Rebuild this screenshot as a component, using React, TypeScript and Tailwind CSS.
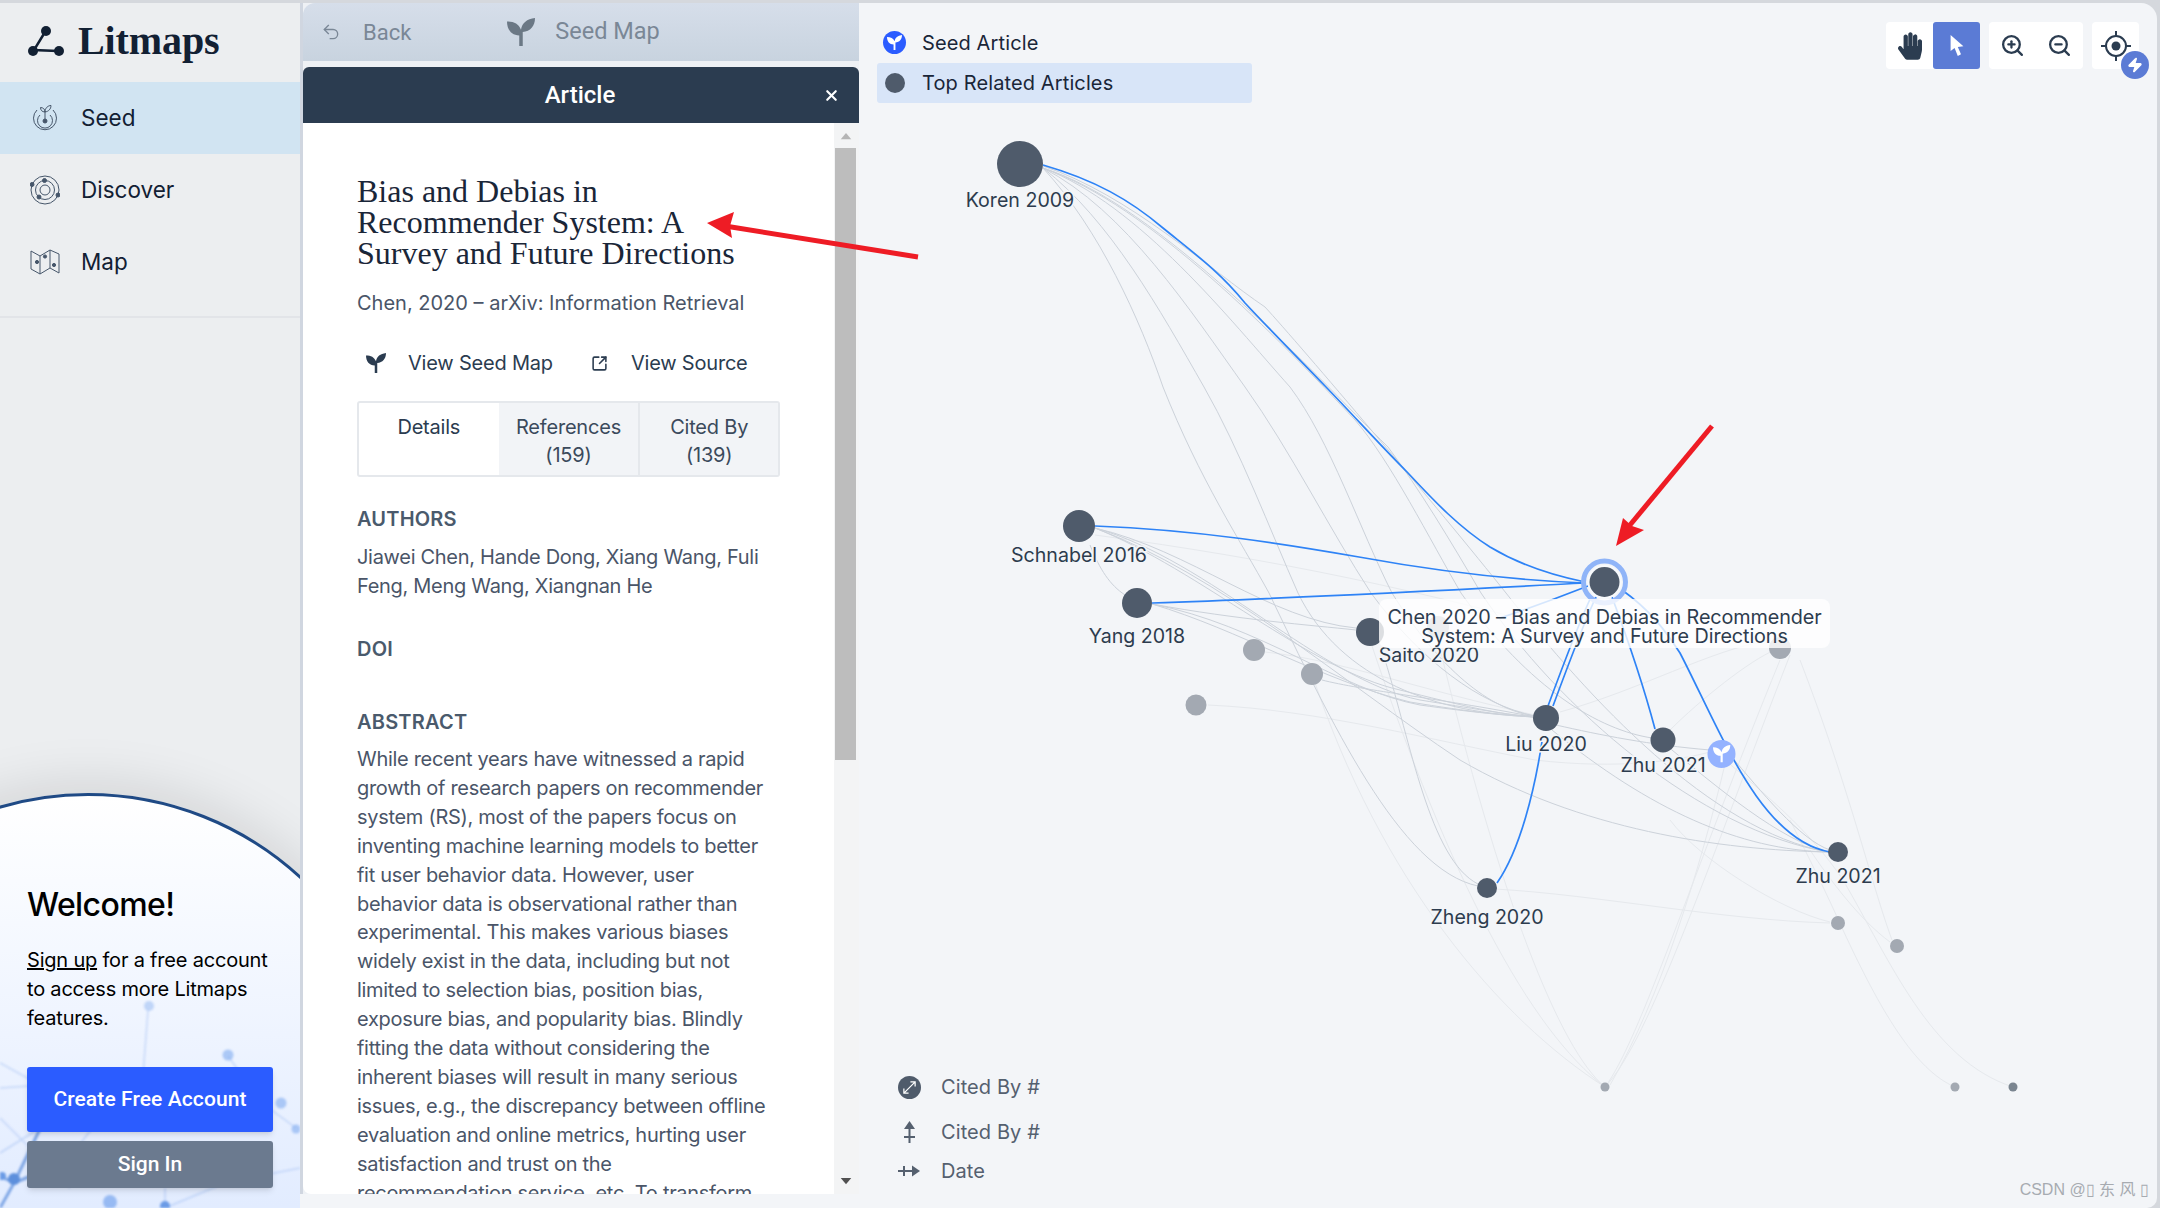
import React from "react";
import { Undo2, X, ZoomIn, ZoomOut, Zap, SquareArrowOutUpRight } from "lucide-react";
import { FaHandPaper } from "react-icons/fa";

const SPROUT = "M10.500 24 L10.500 15 C4 15 0 10 0 3 C6 3 10 5 12 10 C13 4 17 1 24 0 C24 7 20 11.500 13.500 12 L13.500 24 Z";

function Sprout({ className }: { className?: string }) {
  return (
    <svg viewBox="0 0 24 24" className={className} fill="currentColor">
      <path d={SPROUT} />
    </svg>
  );
}

function SeedIcon() {
  return (
    <svg viewBox="0 0 26 28" className="w-[26px] h-[28px]" fill="none" stroke="#46566a" strokeWidth="1">
      <path d="M5 6 A11.500 11.500 0 1 0 21 6" />
      <path d="M8 11 A7.500 7.500 0 1 0 18 11" />
      <circle cx="13" cy="17" r="2" fill="#46566a" />
      <path d="M13 15 L13 7 M13 8 C10 8 8.500 6 8.500 3.500 C11 3.500 13 5 13 8 C13 4 16 1.500 19 1.500 C19 5 16.500 7.500 13 8" />
    </svg>
  );
}

function DiscoverIcon() {
  return (
    <svg viewBox="0 0 30 30" className="w-[30px] h-[30px]" fill="none" stroke="#46566a" strokeWidth="1">
      <circle cx="15" cy="15" r="5" />
      <circle cx="15" cy="15" r="9.500" />
      <circle cx="15" cy="15" r="14" />
      <circle cx="14.500" cy="5.500" r="2" fill="#46566a" />
      <circle cx="9" cy="22" r="2" fill="#46566a" />
      <circle cx="28" cy="20" r="2" fill="#46566a" />
      <circle cx="2" cy="9.500" r="2" fill="#46566a" />
    </svg>
  );
}

function MapIcon() {
  return (
    <svg viewBox="0 0 30 28" className="w-[30px] h-[28px]" fill="none" stroke="#46566a" strokeWidth="1">
      <path d="M1 3 L10 8 L10 26 L1 21 Z M10 8 L20 2 L20 20 L10 26 M20 2 L29 6 L29 25 L20 20" strokeLinejoin="round" />
      <circle cx="7" cy="14" r="1.600" fill="#46566a" />
      <circle cx="15" cy="8.500" r="1.600" fill="#46566a" />
      <circle cx="24" cy="17" r="1.600" fill="#46566a" />
    </svg>
  );
}

const blueEdges = [
  "M1043,165 C1095,180 1130,200 1163,228 C1195,254 1220,272 1245,303 C1275,335 1300,360 1326,387 C1355,417 1380,445 1408,473 C1435,502 1460,528 1490,547 C1520,565 1550,575 1585,582",
  "M1095,526 C1200,530 1290,545 1359,557 C1430,570 1510,580 1585,583",
  "M1152,603 C1300,598 1450,590 1585,583",
  "M1553,706 C1570,660 1585,620 1596,597",
  "M1548,706 C1565,660 1578,625 1591,597",
  "M1588,586 C1560,597 1530,608 1500,618",
  "M1655,729 C1642,680 1628,640 1612,597",
  "M1622,590 C1650,610 1665,630 1680,653 C1720,730 1760,840 1830,852",
  "M1497,883 C1520,850 1535,790 1543,735",
];

const grayEdges = [
  "M1043,168 C1100,230 1140,320 1163,387 C1200,480 1240,540 1269,593 C1330,720 1400,870 1478,886",
  "M1043,168 C1110,220 1160,310 1204,387 C1240,450 1270,530 1298,593 C1340,680 1440,715 1535,716",
  "M1043,168 C1125,210 1190,310 1245,387 C1290,450 1330,530 1371,593 C1420,660 1480,705 1535,716",
  "M1043,168 C1140,205 1230,320 1290,387 C1330,440 1360,530 1392,593 C1440,670 1490,710 1535,716",
  "M1043,168 C1150,205 1280,340 1355,420 C1390,460 1430,540 1461,593 C1530,690 1600,730 1652,738",
  "M1043,168 C1160,205 1310,370 1388,447 C1420,490 1450,540 1481,593 C1560,710 1700,830 1828,852",
  "M1043,166 C1130,195 1210,270 1265,307 C1300,345 1440,510 1506,593 C1590,700 1710,830 1828,852",
  "M1095,528 C1200,570 1310,670 1400,690 C1460,705 1500,715 1535,717",
  "M1095,528 C1210,560 1320,680 1420,700 C1470,708 1510,715 1535,717",
  "M1095,528 C1190,550 1270,620 1356,628",
  "M1095,528 C1220,575 1340,680 1460,760 C1580,830 1720,850 1828,852",
  "M1152,604 C1240,620 1310,625 1356,630",
  "M1152,604 C1260,625 1340,690 1420,705 C1470,712 1510,716 1535,717",
  "M1152,604 C1240,630 1320,680 1410,702 C1470,712 1510,716 1535,717",
  "M1090,545 C1100,570 1110,585 1125,595",
  "M1385,660 C1410,740 1430,860 1478,884",
  "M1322,680 C1360,690 1450,700 1535,717",
  "M1556,725 C1600,735 1650,745 1710,750",
  "M1552,730 C1650,810 1740,850 1828,852",
  "M1660,740 C1720,790 1780,840 1828,852",
  "M1730,755 C1760,790 1800,840 1830,850",
];

const faintEdges = [
  "M1208,705 C1320,710 1430,740 1535,760 C1620,770 1680,760 1710,752",
  "M1495,889 C1600,895 1720,920 1830,923",
  "M1265,652 C1340,660 1420,690 1535,715",
  "M1095,535 C1280,560 1420,590 1600,640",
  "M1605,1087 C1640,1040 1690,880 1780,660",
  "M1605,1087 C1650,1040 1710,860 1790,655",
  "M1605,1087 C1500,1020 1380,880 1312,674",
  "M1605,1087 C1530,1030 1450,880 1370,640",
  "M1605,1087 C1560,1050 1500,900 1438,640",
  "M1955,1087 C1915,1070 1880,1010 1843,930 C1825,890 1810,860 1790,820",
  "M2013,1087 C1930,1060 1890,960 1843,880 C1810,830 1760,790 1725,760",
  "M1890,942 C1860,920 1830,880 1810,850",
  "M1892,940 C1870,880 1850,790 1800,660",
  "M1830,922 C1780,910 1700,860 1670,820",
  "M1560,712 C1640,690 1710,650 1770,640",
  "M1670,730 C1700,700 1750,660 1775,650",
  "M1726,760 C1700,870 1660,1000 1610,1085",
];

const labels: [string, number, number][] = [
  ["Koren 2009", 1020, 207],
  ["Schnabel 2016", 1079, 562],
  ["Yang 2018", 1137, 643],
  ["Saito 2020", 1429, 662],
  ["Liu 2020", 1546, 751],
  ["Zhu 2021", 1663, 772],
  ["Zhu 2021", 1838, 883],
  ["Zheng 2020", 1487, 924],
];

const darkNodes: [number, number, number][] = [
  [1020, 164, 23],
  [1079, 526, 16],
  [1137, 603, 15],
  [1370, 632, 14],
  [1546, 718, 13],
  [1663, 740, 12.500],
  [1838, 852, 10],
  [1487, 888, 10],
];

const grayNodes: [number, number, number, string][] = [
  [1254, 650, 11, "#a3a9b2"],
  [1312, 674, 11, "#a3a9b2"],
  [1196, 705, 10.500, "#a3a9b2"],
  [1438, 627, 11, "#a3a9b2"],
  [1780, 648, 11, "#a3a9b2"],
  [1838, 923, 7, "#a3a9b2"],
  [1897, 946, 7, "#a3a9b2"],
  [1605, 1087, 4.500, "#a3a9b2"],
  [1955, 1087, 4.500, "#a3a9b2"],
  [2013, 1087, 4.500, "#7a8590"],
];

const abstractLines = [
  "While recent years have witnessed a rapid",
  "growth of research papers on recommender",
  "system (RS), most of the papers focus on",
  "inventing machine learning models to better",
  "fit user behavior data. However, user",
  "behavior data is observational rather than",
  "experimental. This makes various biases",
  "widely exist in the data, including but not",
  "limited to selection bias, position bias,",
  "exposure bias, and popularity bias. Blindly",
  "fitting the data without considering the",
  "inherent biases will result in many serious",
  "issues, e.g., the discrepancy between offline",
  "evaluation and online metrics, hurting user",
  "satisfaction and trust on the",
  "recommendation service, etc. To transform",
];

function Graph() {
  return (
    <svg viewBox="860 0 1300 1208" className="absolute inset-0 w-[1300px] h-[1208px]" fill="none">
      {faintEdges.map((d, i) => (
        <path key={i} d={d} stroke="#e6e9ed" strokeWidth="1" />
      ))}
      {grayEdges.map((d, i) => (
        <path key={i} d={d} stroke="#ccd2da" strokeWidth="1" />
      ))}
      {blueEdges.map((d, i) => (
        <path key={i} d={d} stroke="#2e83f6" strokeWidth="1.700" />
      ))}
      {grayNodes.map(([x, y, r, c], i) => (
        <circle key={i} cx={x} cy={y} r={r} fill={c} />
      ))}
      {darkNodes.map(([x, y, r], i) => (
        <circle key={i} cx={x} cy={y} r={r} fill="#4f5b6b" />
      ))}
      <circle cx="1604.500" cy="582" r="21" stroke="#8fb4f8" strokeWidth="5" />
      <circle cx="1604.500" cy="582" r="17" fill="#f8fafc" />
      <circle cx="1604.500" cy="582" r="15" fill="#4f5b6b" />
      <circle cx="1721.500" cy="754" r="14" fill="#94b2ff" />
      <path d={SPROUT} transform="translate(1713,745) scale(0.72)" fill="#ffffff" />
      {labels.map(([t, x, y], i) => (
        <text
          key={i}
          x={x}
          y={y}
          textAnchor="middle"
          fontFamily="Inter, sans-serif"
          fontSize="19.600"
          fill="#2d3c4e"
          stroke="#f3f5f8"
          strokeWidth="3"
          paintOrder="stroke"
        >
          {t}
        </text>
      ))}
    </svg>
  );
}

export default function App() {
  return (
    <div className="relative w-[2160px] h-[1208px] overflow-hidden bg-[#d5d8dd] pt-[3px] flex font-['Inter',sans-serif]">
      {/* Sidebar */}
      <aside className="relative w-[300px] shrink-0 bg-[#eceef0] overflow-hidden flex flex-col">
        <div className="absolute left-[-227px] top-[790px] w-[630px] h-[630px] rounded-full border-[3px] border-[#1f4a85] bg-linear-to-b from-white to-[#d3e2ff] shadow-[0_-12px_50px_rgba(0,0,0,0.10)]" />
        <svg viewBox="0 0 300 420" className="absolute left-0 bottom-0 w-[300px] h-[420px] blur-[0.8px]" fill="none" stroke="#7ea6ea" strokeWidth="1.500">
          <g opacity="0.35">
            <path d="M148 222 L142 300 M228 268 L262 315 L296 340 M0 275 L100 330 M0 300 L105 293 M0 330 L70 400 M0 365 L40 340 M50 395 L100 330 L120 300 M165 420 L165 400 M165 420 L225 395 L300 380" />
          </g>
          <g stroke="#5d8fdc" strokeWidth="3" opacity="0.75">
            <path d="M14 395 L50 320 M14 395 L0 420 M14 395 L0 388 M14 395 L50 380" />
          </g>
          <g fill="#8fb5f2" stroke="none">
            <circle cx="149" cy="218" r="5" opacity="0.5" />
            <circle cx="228" cy="267" r="5.500" opacity="0.7" />
            <circle cx="281" cy="315" r="5.500" opacity="0.7" />
            <circle cx="296" cy="341" r="4.500" opacity="0.7" />
            <circle cx="14" cy="391" r="6" fill="#5d8fdc" />
            <circle cx="110" cy="414" r="7" opacity="0.9" />
            <circle cx="165" cy="418" r="5" fill="#6b9be6" />
            <circle cx="2" cy="388" r="4" fill="#6b9be6" />
          </g>
        </svg>

        <div className="relative flex items-center h-[79px] pl-[28px] pb-[3px] gap-[14px]">
          <svg viewBox="0 0 36 32" className="w-[36px] h-[32px]" fill="#122033" stroke="#122033">
            <circle cx="18" cy="6" r="5" stroke="none" />
            <circle cx="5" cy="26" r="5" stroke="none" />
            <circle cx="31" cy="26" r="5" stroke="none" />
            <path d="M17 7 L6 25 L30 26" fill="none" strokeWidth="2.500" />
          </svg>
          <span className="font-['Liberation_Serif',serif] font-bold text-[40px] leading-none text-[#122033] tracking-[-0.1px]">Litmaps</span>
        </div>
        <nav className="relative flex flex-col border-b-2 border-[#e2e4e8] pb-[18px]">
          <a className="h-[72px] flex items-center bg-[#d1e4f2] text-[#122033] text-[22.500px]">
            <span className="w-[81px] flex justify-center pl-[8px]"><span className="flex w-[30px] justify-center"><SeedIcon /></span></span>
            <span>Seed</span>
          </a>
          <a className="h-[72px] flex items-center text-[#122033] text-[22.500px]">
            <span className="w-[81px] flex justify-center pl-[8px]"><DiscoverIcon /></span>
            <span>Discover</span>
          </a>
          <a className="h-[72px] flex items-center text-[#122033] text-[22.500px]">
            <span className="w-[81px] flex justify-center pl-[8px]"><MapIcon /></span>
            <span>Map</span>
          </a>
        </nav>

        <div className="relative mt-auto px-[27px] pb-[20px] flex flex-col text-black">
          <h2 className="text-[32px] leading-[40px] font-medium tracking-[-0.6px] translate-y-[1px]">Welcome!</h2>
          <p className="mt-[22px] text-[20px] leading-[29px] tracking-[-0.2px]">
            <span className="underline">Sign up</span> for a free account<br />to access more Litmaps<br />features.
          </p>
          <button className="mt-[34px] h-[65px] w-[246px] rounded-[3px] bg-[#2b5cff] text-white text-[21px] tracking-[0.1px] font-medium shadow-md font-['Roboto',sans-serif]">Create Free Account</button>
          <button className="mt-[9px] h-[47px] w-[246px] rounded-[3px] bg-[#6b7a8f] text-white text-[21px] font-medium shadow-md font-['Roboto',sans-serif]">Sign In</button>
        </div>
      </aside>

      {/* Article panel */}
      <section className="w-[560px] shrink-0 bg-[#f3f5f8] flex flex-col pb-[14px] pr-[1px]">
        <div className="flex-1 min-h-0 flex flex-col border-l-[3px] border-[#d0d6e0] bg-[#eef1f5]">
          <div className="h-[58px] shrink-0 bg-linear-to-b from-[#d6deea] to-[#c8d3df] rounded-tl-[12px] flex items-center text-[#7a8796] font-['Roboto',sans-serif]">
            <Undo2 className="ml-[18px] w-[20px] h-[22px]" strokeWidth={1.600} />
            <span className="ml-[22px] text-[22px]">Back</span>
            <Sprout className="ml-[95px] w-[30px] h-[28px] text-[#6b7885]" />
            <span className="ml-[19px] text-[23.500px]">Seed Map</span>
          </div>
          <div className="mt-[6px] h-[56px] shrink-0 bg-[#2b3c50] rounded-t-[6px] relative flex items-center justify-center text-white font-['Roboto',sans-serif]">
            <span className="text-[24px] font-medium pr-[2px]">Article</span>
            <X className="absolute right-[19px] top-[20px] w-[17px] h-[17px]" strokeWidth={3} />
          </div>
          <div className="flex-1 min-h-0 flex bg-white rounded-bl-[8px]">
            <div className="flex-1 min-w-0 overflow-hidden pl-[54px] pt-[53px]">
              <h1 className="font-['Liberation_Serif',serif] text-[32px] leading-[31px] text-[#1a2638]">
                Bias and Debias in<br />Recommender System: A<br />Survey and Future Directions
              </h1>
              <p className="mt-[20px] text-[20px] leading-[28px] text-[#4a5568] whitespace-nowrap">Chen, 2020 – arXiv: Information Retrieval</p>
              <div className="mt-[32px] flex items-center h-[28px] text-[20px] text-[#2b3c50] tracking-[-0.2px]">
                <Sprout className="ml-[8px] w-[22px] h-[20px]" />
                <span className="ml-[21px]">View Seed Map</span>
                <SquareArrowOutUpRight className="ml-[38px] w-[17px] h-[17px]" strokeWidth={2.200} />
                <span className="ml-[23px]">View Source</span>
              </div>
              <div className="mt-[24px] w-[423px] h-[76px] grid grid-cols-3 border-2 border-[#e5e8ec] rounded-[3px] text-[20px] leading-[28px] text-[#2b3c50] text-center tracking-[-0.2px]">
                <div className="pt-[10px] font-normal">Details</div>
                <div className="pt-[10px] bg-[#f2f4f7] text-[#3b4a5c]">References<br />(159)</div>
                <div className="pt-[10px] bg-[#f2f4f7] border-l-2 border-[#e5e8ec] text-[#3b4a5c]">Cited By<br />(139)</div>
              </div>
              <h3 className="mt-[28px] text-[20px] leading-[28px] font-semibold text-[#4a5a6c] tracking-[0.2px]">AUTHORS</h3>
              <p className="mt-[10px] text-[20px] leading-[29px] text-[#4a5568] tracking-[-0.3px] whitespace-nowrap">
                Jiawei Chen, Hande Dong, Xiang Wang, Fuli<br />Feng, Meng Wang, Xiangnan He
              </p>
              <h3 className="mt-[34px] text-[20px] leading-[28px] font-semibold text-[#4a5a6c] tracking-[0.2px]">DOI</h3>
              <h3 className="mt-[45px] text-[20px] leading-[28px] font-semibold text-[#4a5a6c] tracking-[0.2px]">ABSTRACT</h3>
              <p className="mt-[9px] text-[20px] leading-[28.900px] text-[#4a5568] tracking-[-0.3px] whitespace-nowrap">
                {abstractLines.map((l, i) => (
                  <span key={i} className="block">{l}</span>
                ))}
              </p>
            </div>
            <div className="w-[25px] shrink-0 bg-[#f3f4f5] flex flex-col items-center pr-[2px]">
              <svg viewBox="0 0 12 8" className="mt-[10px] w-[12px] h-[7px]"><path d="M0 7 L6 0 L12 7 Z" fill="#b5b5b5" /></svg>
              <div className="mt-[8px] w-[21px] h-[612px] bg-[#bdbdbd]" />
              <svg viewBox="0 0 12 8" className="mt-auto mb-[9px] w-[12px] h-[7px]"><path d="M0 0 L12 0 L6 7 Z" fill="#505050" /></svg>
            </div>
          </div>
        </div>
      </section>

      {/* Map */}
      <main className="relative flex-1 mr-[3px] bg-[#f3f5f8] rounded-tr-[16px] rounded-br-[10px] overflow-hidden">
        <div className="absolute inset-0 -top-[3px]"><Graph /></div>

        <div className="absolute left-[17px] top-[19px] w-[375px] text-[20px] text-[#1a2638] tracking-[0.12px]">
          <div className="h-[41px] flex items-center">
            <span className="ml-[6px] w-[23px] h-[23px] rounded-full bg-[#2b5cff] flex items-center justify-center text-white">
              <Sprout className="w-[15px] h-[15px]" />
            </span>
            <span className="ml-[16px]">Seed Article</span>
          </div>
          <div className="h-[40px] flex items-center bg-[#d8e5f8] rounded-[3px]">
            <span className="ml-[8px] w-[20px] h-[20px] rounded-full bg-[#4f5b6b]" />
            <span className="ml-[17px] ">Top Related Articles</span>
          </div>
        </div>

        <div className="absolute left-[519px] top-[596px] w-[451px] h-[49px] rounded-[8px] bg-white/80 text-center text-[19.800px] leading-[19px] pt-[9px] text-[#2d3c4e] tracking-[-0.1px] whitespace-nowrap">
          Chen 2020 – Bias and Debias in Recommender<br />System: A Survey and Future Directions
        </div>

        <div className="absolute right-[18px] top-[19px] flex items-start gap-[9px] text-[#2b3c50]">
          <div className="flex h-[47px] rounded-[4px] bg-white">
            <span className="w-[47px] flex items-center justify-center"><FaHandPaper className="w-[24px] h-[28px]" /></span>
            <span className="w-[47px] flex items-center justify-center bg-[#5b7bd5] rounded-[3px]">
              <svg viewBox="0 0 20 28" className="w-[16px] h-[25px]"><path d="M2 1 L2 21 L7 17 L11 27 L15 25 L11 16 L18 15 Z" fill="#fff" /></svg>
            </span>
          </div>
          <div className="flex h-[47px] rounded-[4px] bg-white">
            <span className="w-[47px] flex items-center justify-center"><ZoomIn className="w-[25px] h-[25px]" strokeWidth={2.200} /></span>
            <span className="w-[47px] flex items-center justify-center"><ZoomOut className="w-[25px] h-[25px]" strokeWidth={2.200} /></span>
          </div>
          <div className="relative h-[47px] w-[47px] rounded-[4px] bg-white flex items-center justify-center">
            <svg viewBox="0 0 30 30" className="w-[30px] h-[30px]" fill="none" stroke="currentColor" strokeWidth="2">
              <circle cx="15" cy="15" r="10" />
              <circle cx="15" cy="15" r="4.500" fill="currentColor" stroke="none" />
              <path d="M15 0 V5 M15 25 V30 M0 15 H5 M25 15 H30" />
            </svg>
            <span className="absolute left-[29px] top-[29px] w-[28px] h-[28px] rounded-full bg-[#5b7bd5] flex items-center justify-center text-white">
              <Zap className="w-[16px] h-[16px]" fill="currentColor" />
            </span>
          </div>
        </div>

        <div className="absolute left-[38px] top-[1065px] text-[20px] leading-[28px] text-[#55606f] tracking-[0.1px]">
          <div className="flex items-center h-[38px]">
            <span className="w-[23px] h-[23px] rounded-full bg-[#4f5b6b] flex items-center justify-center">
              <svg viewBox="0 0 16 16" className="w-[15px] h-[15px]" fill="none" stroke="#fff" strokeWidth="1.300"><path d="M2 14 L14 2 M9 2 H14 V7 M2 9 V14 H7" /></svg>
            </span>
            <span className="ml-[20px]">Cited By #</span>
          </div>
          <div className="flex items-center h-[44px] pt-[7px]">
            <svg viewBox="0 0 23 24" className="w-[23px] h-[24px]" fill="#55606f" stroke="#55606f"><path d="M11.500 1 L17 9 H6 Z" stroke="none" /><path d="M11.500 8 V23 M6 17 H17" strokeWidth="2" /></svg>
            <span className="ml-[20px]">Cited By #</span>
          </div>
          <div className="flex items-center h-[30px] mt-[6px]">
            <svg viewBox="0 0 23 14" className="w-[23px] h-[14px]" fill="#55606f" stroke="#55606f"><path d="M22 7 L14 1.500 V12.500 Z" stroke="none" /><path d="M0 7 H15 M6 2 V12" strokeWidth="2" /></svg>
            <span className="ml-[20px]">Date</span>
          </div>
        </div>

        <div className="absolute right-[8px] bottom-[8px] text-[16px] leading-[20px] text-[#a7abb1] font-['Liberation_Sans','Noto_Sans_CJK_SC',sans-serif]">CSDN @▯ 东 风 ▯</div>
      </main>

      {/* Red annotation arrows */}
      <svg viewBox="0 0 2160 1208" className="absolute inset-0 w-[2160px] h-[1208px] pointer-events-none">
        <path d="M918 257 L725 226" stroke="#ee1c25" strokeWidth="5" />
        <path d="M707 223 L734 212 L730 226 L732 238 Z" fill="#ee1c25" />
        <path d="M1712 426 L1630 525" stroke="#ee1c25" strokeWidth="5" />
        <path d="M1616 546 L1623 518 L1632 526 L1644 530 Z" fill="#ee1c25" />
      </svg>
    </div>
  );
}
